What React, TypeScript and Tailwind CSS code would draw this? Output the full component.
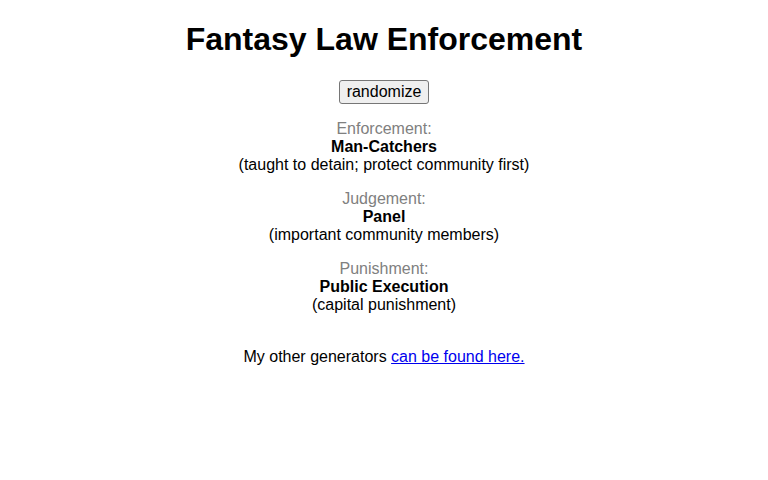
import { useState } from 'react';

type Pick = { label: string; name: string; note: string };

const results: Pick[] = [
  { label: 'Enforcement:', name: 'Man-Catchers', note: '(taught to detain; protect community first)' },
  { label: 'Judgement:', name: 'Panel', note: '(important community members)' },
  { label: 'Punishment:', name: 'Public Execution', note: '(capital punishment)' },
];

export default function App() {
  const [items] = useState(results);

  return (
    <div className="min-h-screen bg-white text-black text-center font-['Liberation_Sans',Arial,sans-serif] text-[16px] leading-[18px]">
      <h1 className="pt-[21px] pb-[22px] text-[32px] leading-[37px] font-bold">
        Fantasy Law Enforcement
      </h1>

      <button className="h-[24px] px-[7px] border border-[#767676] rounded-[3px] bg-[#efefef] text-[16px] leading-[18px] text-black">
        randomize
      </button>

      <div className="mt-[16px] flex flex-col gap-[16px]">
        {items.map((item) => (
          <div key={item.label}>
            <div className="text-[#808080]">{item.label}</div>
            <div className="font-bold">{item.name}</div>
            <div>{item.note}</div>
          </div>
        ))}
      </div>

      <p className="mt-[34px]">
        My other generators{' '}
        <a href="#" className="text-[#0000ee] underline">
          can be found here.
        </a>
      </p>
    </div>
  );
}
